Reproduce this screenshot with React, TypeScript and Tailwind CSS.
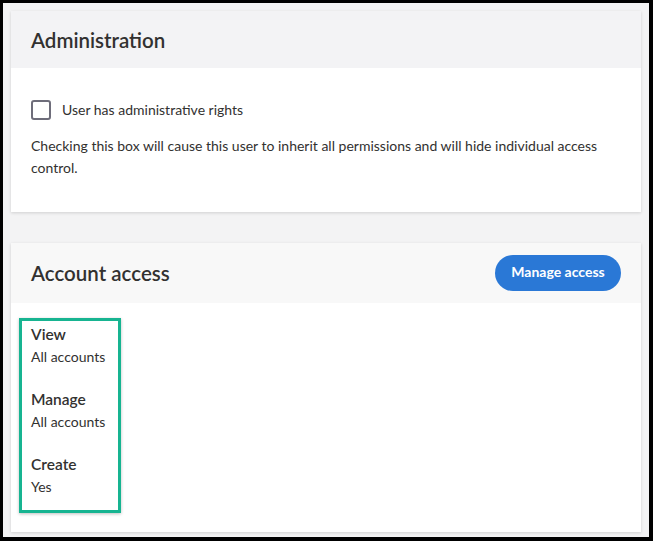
import React from "react";

function Item({ label, value }: { label: string; value: string }) {
  return (
    <div className="flex flex-col">
      <div className="text-[15.5px] font-semibold leading-[22px] text-[#323130]">{label}</div>
      <div className="text-[14px] leading-[24px] text-[#323130]">{value}</div>
    </div>
  );
}

export default function App() {
  return (
    <div
      className="w-[653px] h-[541px] bg-black pt-[3px] pl-[3px] pr-[4px] pb-[4px]"
      style={{ fontFamily: "Lato, 'Open Sans', sans-serif" }}
    >
      <div className="h-full w-full bg-[#f3f3f4] px-[8px] pt-[8px] pb-[5px] flex flex-col gap-[31px]">
        <section className="bg-white shadow-[0_1px_3px_rgba(0,0,0,0.15)]">
          <div className="h-[57px] bg-[#f3f3f5] px-[20px] pt-[2px] flex items-center">
            <h2 className="text-[20.5px] font-semibold text-[#323130]">Administration</h2>
          </div>
          <div className="px-[20px] pt-[32px] pb-[33px]">
            <label className="flex items-center gap-[11px] h-[20px]">
              <span className="w-[20px] h-[20px] rounded-[3px] border-2 border-[#6e6d7a] bg-white" />
              <span className="text-[14px] leading-[18px] text-[#323130] -mt-[1px]">User has administrative rights</span>
            </label>
            <p className="mt-[15px] text-[14px] leading-[22px] text-[#323130]">
              Checking this box will cause this user to inherit all permissions and will hide individual access
              control.
            </p>
          </div>
        </section>
        <section className="flex-1 bg-white shadow-[0_1px_3px_rgba(0,0,0,0.15)] flex flex-col">
          <div className="h-[60px] bg-[#f8f8f8] pl-[20px] pr-[20px] flex items-center justify-between">
            <h2 className="text-[20.5px] font-semibold text-[#323130]">Account access</h2>
            <button className="h-[36px] w-[126px] rounded-full bg-[#2a78d6] text-white text-[14px] font-bold leading-[34px] pb-[2px]">
              Manage access
            </button>
          </div>
          <div className="pt-[15px] pl-[8px]">
            <div className="w-[102px] h-[195px] border-[3px] border-[#17b491] shadow-[0_1px_3px_rgba(0,0,0,0.25)] pl-[9px] pt-[2px] flex flex-col gap-[19px]">
              <Item label="View" value="All accounts" />
              <Item label="Manage" value="All accounts" />
              <Item label="Create" value="Yes" />
            </div>
          </div>
        </section>
      </div>
    </div>
  );
}
